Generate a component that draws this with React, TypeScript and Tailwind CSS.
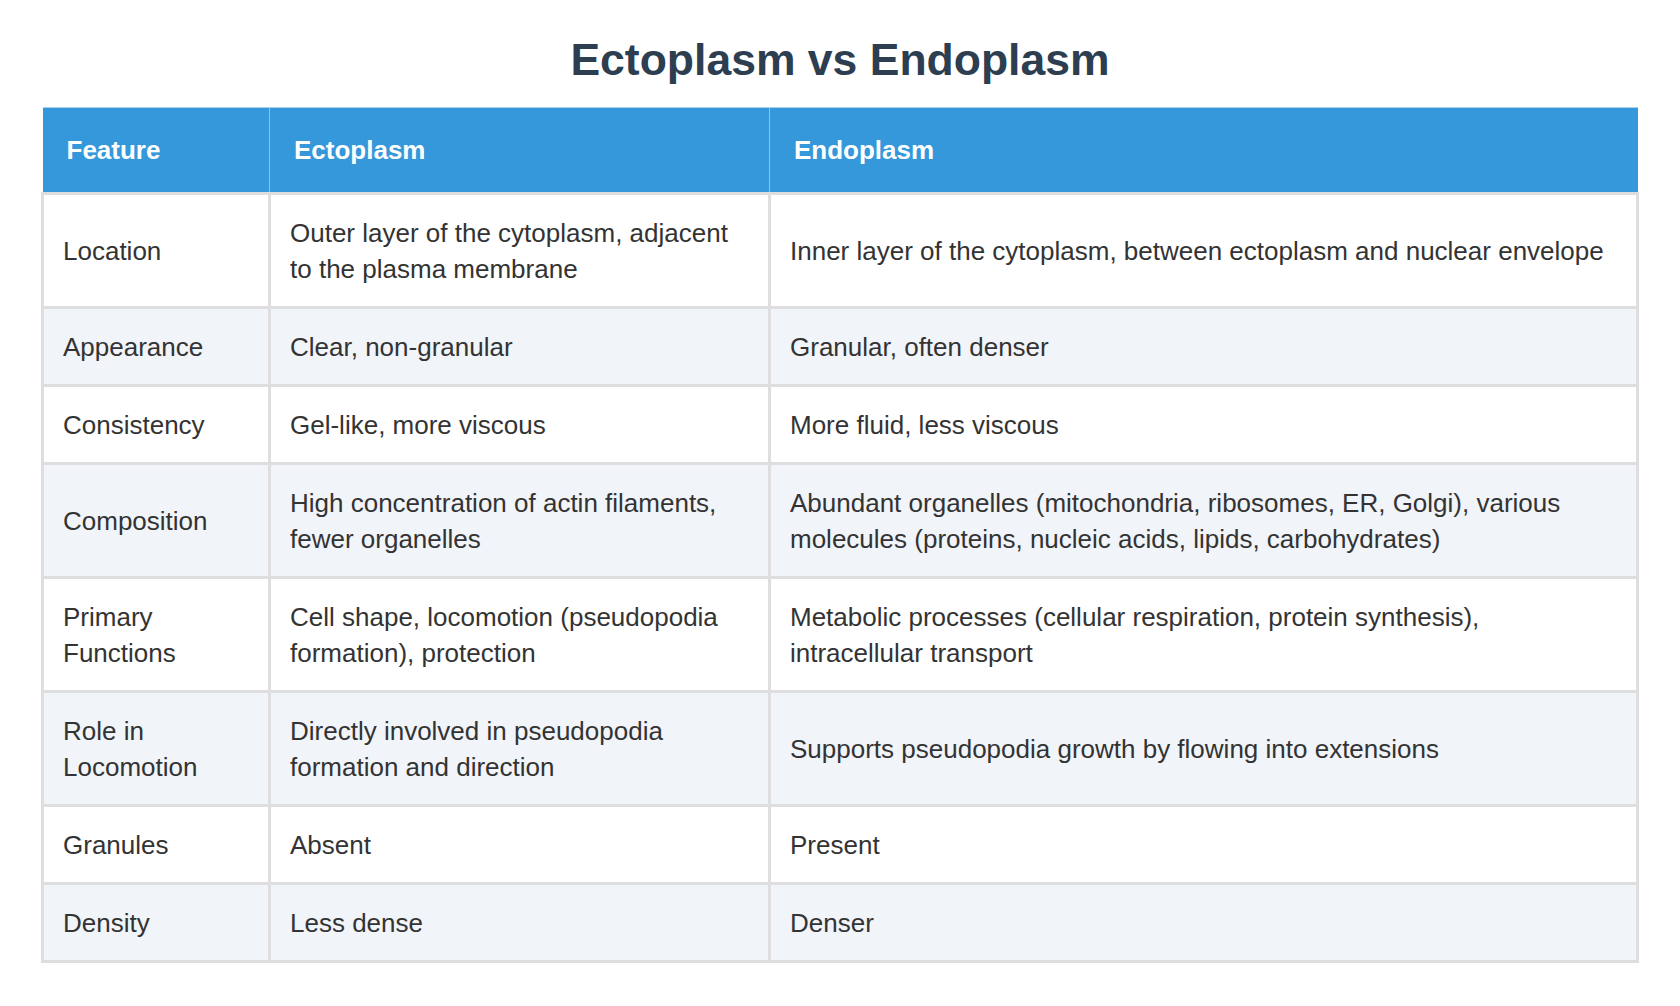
const rows: [string, string, string][] = [
  [
    "Location",
    "Outer layer of the cytoplasm, adjacent to the plasma membrane",
    "Inner layer of the cytoplasm, between ectoplasm and nuclear envelope",
  ],
  ["Appearance", "Clear, non-granular", "Granular, often denser"],
  ["Consistency", "Gel-like, more viscous", "More fluid, less viscous"],
  [
    "Composition",
    "High concentration of actin filaments, fewer organelles",
    "Abundant organelles (mitochondria, ribosomes, ER, Golgi), various molecules (proteins, nucleic acids, lipids, carbohydrates)",
  ],
  [
    "Primary Functions",
    "Cell shape, locomotion (pseudopodia formation), protection",
    "Metabolic processes (cellular respiration, protein synthesis), intracellular transport",
  ],
  [
    "Role in Locomotion",
    "Directly involved in pseudopodia formation and direction",
    "Supports pseudopodia growth by flowing into extensions",
  ],
  ["Granules", "Absent", "Present"],
  ["Density", "Less dense", "Denser"],
];

export default function App() {
  return (
    <div className="min-h-screen bg-white px-[41px] pt-[37px] font-['Liberation_Sans',Arial,sans-serif] text-[#333333]">
      {/* Title */}
      <h1 className="mb-[25px] text-center text-[44.5px] font-bold leading-[45px] text-[#2c3e50]">
        Ectoplasm vs Endoplasm
      </h1>

      {/* Comparison table */}
      <table className="w-full table-fixed border-collapse text-[26px] leading-[36px]">
        <colgroup>
          <col className="w-[227px]" />
          <col className="w-[500px]" />
          <col />
        </colgroup>
        <thead>
          <tr className="border-t border-[#a9d2f1] bg-[#3498db] text-left text-white">
            <th className="border-r border-[#8cc4ec] px-[24px] py-[24px] font-bold">Feature</th>
            <th className="border-r border-[#8cc4ec] px-[24px] py-[24px] font-bold">Ectoplasm</th>
            <th className="px-[24px] py-[24px] font-bold">Endoplasm</th>
          </tr>
        </thead>
        <tbody>
          {rows.map(([feature, ecto, endo], i) => (
            <tr key={feature} className={i % 2 === 0 ? "bg-white" : "bg-[#f1f4f9]"}>
              <td className="border-[3px] border-[#dedede] px-[19px] py-[19.5px] align-middle">{feature}</td>
              <td className="border-[3px] border-[#dedede] px-[19px] py-[19.5px] align-middle">{ecto}</td>
              <td className="border-[3px] border-[#dedede] px-[19px] py-[19.5px] align-middle">{endo}</td>
            </tr>
          ))}
        </tbody>
      </table>
    </div>
  );
}
